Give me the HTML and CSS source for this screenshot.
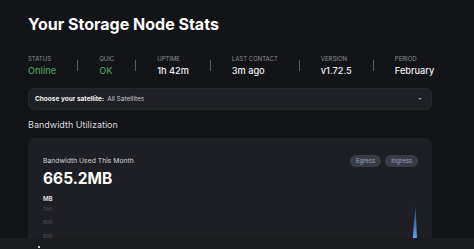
FILE: index.html
```html
<!DOCTYPE html>
<html lang="en">
<head>
  <meta charset="UTF-8">
  <title>Storage Node Dashboard</title>
  <link rel="stylesheet" href="styles.css">
</head>
<body>
  <div class="page">
    <h1 class="page-title">Your Storage Node Stats</h1>

    <div class="stats-row">
      <div class="stat">
        <span class="stat-label">Status</span>
        <span class="stat-value ok">Online</span>
      </div>
      <div class="stat-sep"></div>
      <div class="stat">
        <span class="stat-label">QUIC</span>
        <span class="stat-value ok">OK</span>
      </div>
      <div class="stat-sep"></div>
      <div class="stat">
        <span class="stat-label">Uptime</span>
        <span class="stat-value">1h 42m</span>
      </div>
      <div class="stat-sep"></div>
      <div class="stat">
        <span class="stat-label">Last Contact</span>
        <span class="stat-value">3m ago</span>
      </div>
      <div class="stat-sep"></div>
      <div class="stat">
        <span class="stat-label">Version</span>
        <span class="stat-value">v1.72.5</span>
      </div>
      <div class="stat-sep"></div>
      <div class="stat">
        <span class="stat-label">Period</span>
        <span class="stat-value">February</span>
      </div>
    </div>

    <div class="satellite-select">
      <span class="select-label">Choose your satellite:</span>
      <span class="select-value">All Satellites</span>
      <span class="select-caret"></span>
    </div>

    <h2 class="section-title">Bandwidth Utilization</h2>

    <div class="chart-card">
      <div class="chart-head">
        <div>
          <div class="chart-caption">Bandwidth Used This Month</div>
          <div class="chart-total">665.2MB</div>
        </div>
        <div class="chart-tags">
          <span class="tag">Egress</span>
          <span class="tag">Ingress</span>
        </div>
      </div>
      <div class="chart-body">
        <div class="axis">
          <span class="axis-unit">MB</span>
          <span>700</span>
          <span>600</span>
          <span>500</span>
        </div>
        <svg class="chart-plot" viewBox="0 0 380 40" preserveAspectRatio="none">
          <defs>
            <linearGradient id="spike" x1="0" y1="0" x2="0" y2="1">
              <stop offset="0" stop-color="#3b82f6" stop-opacity="0.4"/>
              <stop offset="1" stop-color="#60a5fa"/>
            </linearGradient>
          </defs>
          <path d="M374 40 L377 6 L378.5 40 Z" fill="url(#spike)"/>
        </svg>
      </div>
    </div>
  </div>

  <div class="bottom-bar"><span class="bottom-dot"></span></div>
</body>
</html>
```

FILE: styles.css
```css
body {
  margin: 0;
  background-color: #131418;
  font-family: Inter, "Noto Sans", sans-serif;
  color: #e9e9ec;
  overflow: hidden;
}

.page {
  padding: 14px 42px 0 28px;
}

.page-title {
  margin: 0;
  font-size: 16px;
  line-height: 20px;
  font-weight: 700;
  color: #ffffff;
}

.stats-row {
  display: flex;
  align-items: center;
  gap: 21px;
  margin-top: 21px;
  white-space: nowrap;
}

.stat {
  display: flex;
  flex-direction: column;
  flex-shrink: 0;
}

.stat-label {
  font-size: 6px;
  line-height: 7px;
  text-transform: uppercase;
  color: #8b8c92;
}

.stat-value {
  margin-top: 3px;
  font-size: 9.2px;
  line-height: 11px;
  font-weight: 500;
  color: #ededf0;
}

.stat-value.ok {
  color: #4c9a5b;
}

.stat-sep {
  flex-shrink: 0;
  width: 1px;
  height: 11px;
  background-color: #5b5c62;
}

.satellite-select {
  display: flex;
  align-items: center;
  height: 20px;
  margin-top: 12px;
  padding: 0 9px 0 6px;
  background-color: #1f2025;
  border: 1px solid #26272c;
  border-radius: 6px;
  font-size: 6.5px;
}

.select-label {
  font-weight: 700;
  color: #f2f2f4;
}

.select-value {
  margin-left: 3px;
  color: #c8c9ce;
}

.select-caret {
  margin-left: auto;
  width: 0;
  height: 0;
  border-left: 2px solid transparent;
  border-right: 2px solid transparent;
  border-top: 2px solid #8b8c92;
}

.section-title {
  margin: 8px 0 0;
  font-size: 9px;
  line-height: 13px;
  font-weight: 400;
  color: #d7d8dc;
}

.chart-card {
  margin-top: 7px;
  height: 100px;
  padding: 17px 14px 0 15px;
  box-sizing: border-box;
  background-color: #1e1f24;
  border-radius: 7px 7px 0 0;
  overflow: hidden;
}

.chart-head {
  display: flex;
  justify-content: space-between;
  align-items: flex-start;
}

.chart-caption {
  margin-top: 1px;
  font-size: 6.8px;
  line-height: 9px;
  color: #d2d3d7;
}

.chart-total {
  margin-top: 5px;
  font-size: 15.5px;
  line-height: 18px;
  font-weight: 700;
  color: #ffffff;
}

.chart-tags {
  display: flex;
  gap: 4px;
}

.tag {
  padding: 2px 6px;
  font-size: 6px;
  line-height: 8px;
  color: #9ba4c4;
  background-color: #3a3c44;
  border-radius: 6px;
}

.chart-body {
  display: flex;
  margin-top: 7px;
}

.axis {
  display: flex;
  flex-direction: column;
  gap: 7.5px;
  font-size: 5px;
  line-height: 6px;
  color: #55565c;
}

.axis-unit {
  margin-bottom: -4px;
  font-size: 6px;
  line-height: 7px;
  font-weight: 700;
  color: #d8d9dd;
}

.chart-plot {
  flex: 1;
  height: 40px;
  margin-top: 4px;
}

.bottom-bar {
  position: fixed;
  left: 0;
  right: 0;
  bottom: 0;
  height: 11px;
  background-color: #1b1c20;
}

.bottom-dot {
  position: absolute;
  left: 38px;
  top: 8px;
  width: 2px;
  height: 2px;
  background-color: #c9cacf;
}
```
